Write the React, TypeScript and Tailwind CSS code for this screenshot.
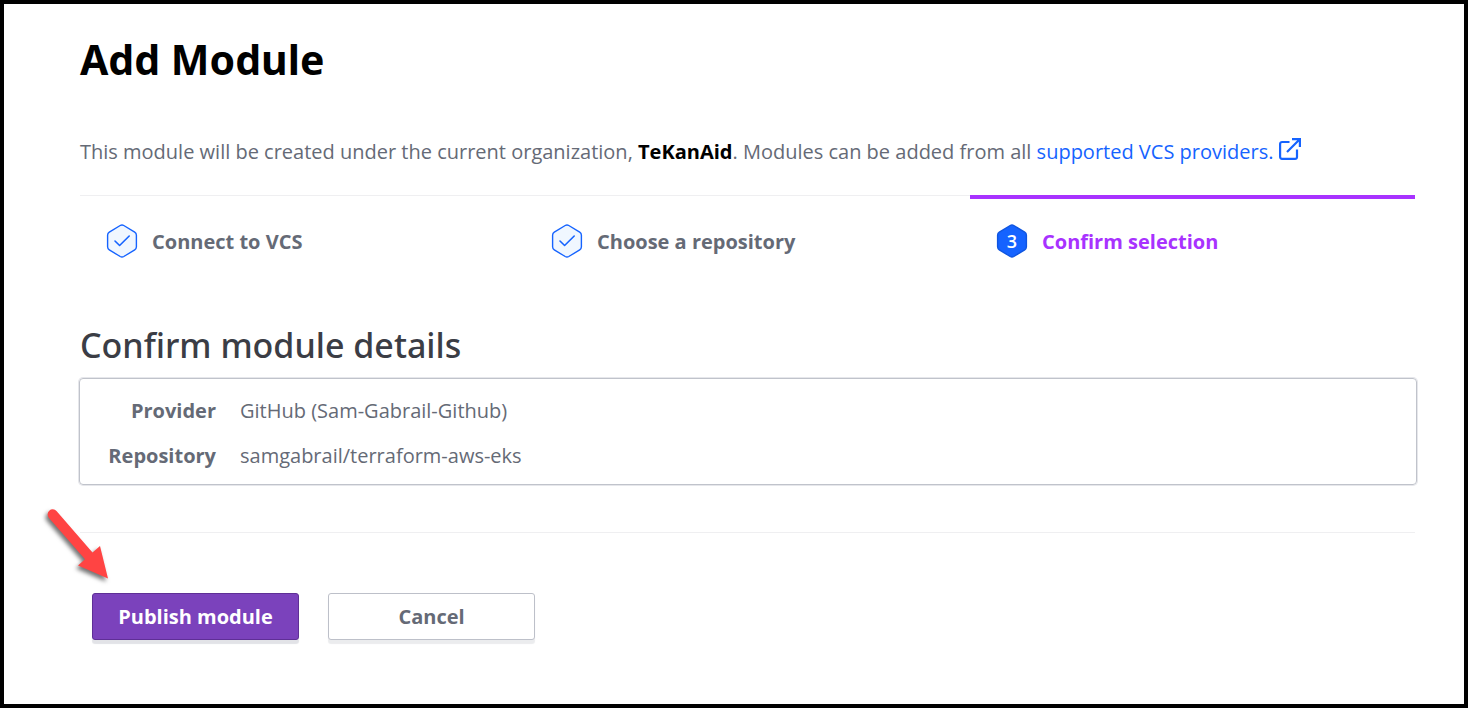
interface Step {
  number: number
  label: string
  done: boolean
}

const steps: Step[] = [
  { number: 1, label: 'Connect to VCS', done: true },
  { number: 2, label: 'Choose a repository', done: true },
  { number: 3, label: 'Confirm selection', done: false },
]

const details = [
  { term: 'Provider', value: 'GitHub (Sam-Gabrail-Github)' },
  { term: 'Repository', value: 'samgabrail/terraform-aws-eks' },
]

const HEXAGON =
  'M14.2 1.5a3.6 3.6 0 0 1 3.6 0l10.9 6.7a3.6 3.6 0 0 1 1.7 3.1v11.4a3.6 3.6 0 0 1-1.7 3.1l-10.9 6.7a3.6 3.6 0 0 1-3.6 0L3.3 25.8A3.6 3.6 0 0 1 1.6 22.7V11.3a3.6 3.6 0 0 1 1.7-3.1z'

function StepBadge({ step }: { step: Step }) {
  return (
    <span className="relative flex h-[34px] w-8 items-center justify-center">
      <svg className="absolute inset-0" width="32" height="34" viewBox="0 0 32 34" aria-hidden="true">
        <path
          d={HEXAGON}
          fill={step.done ? '#f0f7ff' : '#1563ff'}
          stroke={step.done ? '#1563ff' : '#0f55e0'}
          strokeWidth="1.4"
        />
        {step.done && (
          <path
            d="M9 17l4.600 4.500L23.200 12"
            fill="none"
            stroke="#1563ff"
            strokeWidth="1.6"
            strokeLinecap="round"
            strokeLinejoin="round"
          />
        )}
      </svg>
      {!step.done && <span className="relative text-lg font-semibold text-white">{step.number}</span>}
    </span>
  )
}

function ExternalLinkIcon() {
  return (
    <svg className="ml-[6px] inline-block align-[-1px]" width="22" height="22" viewBox="0 0 22 22" fill="none" aria-hidden="true">
      <path
        d="M10.5 4H3.2A2 2 0 0 0 1.1 6V19A2 2 0 0 0 3.2 20.9H16A2 2 0 0 0 18 19V11.5"
        stroke="#1563ff"
        strokeWidth="2.2"
      />
      <path d="M8 14L20.5 1.5M13 1.1H20.9V9" stroke="#1563ff" strokeWidth="2.2" />
    </svg>
  )
}

// Red callout that points at the publish button
function Arrow() {
  return (
    <svg
      className="pointer-events-none absolute -top-[90px] -left-[55px]"
      width="80"
      height="90"
      viewBox="0 0 80 90"
      aria-hidden="true"
    >
      <path
        d="M19.500 8L55.500 49.500L63 43L71 75.500L41 62.500L48 56.200L12 15A4.900 4.900 0 0 1 19.500 8Z"
        fill="#ff4443"
        className="drop-shadow-[-2px_3px_2px_rgba(0,0,0,0.55)]"
      />
    </svg>
  )
}

export default function App() {
  return (
    <div className="min-h-screen border-4 border-black bg-white pt-[31px] pr-[49px] pb-14 pl-[76px] font-['Open_Sans','Noto_Sans',sans-serif] text-xl text-[#656a76]">
      <h1 className="font-['Noto_Sans',sans-serif] text-[41px] leading-[48px] font-bold text-black">Add Module</h1>

      <p className="mt-[53px] leading-8">
        This module will be created under the current organization,{' '}
        <strong className="font-bold text-black">TeKanAid</strong>. Modules can be added from all{' '}
        <a href="#providers" className="text-[#1563ff]">
          supported VCS providers.
          <ExternalLinkIcon />
        </a>
      </p>

      <ol className="mt-[27px] grid grid-cols-3">
        {steps.map(step => (
          <li
            key={step.number}
            className={
              step.done
                ? 'flex h-[92px] items-center gap-[14px] pl-[26px] font-bold shadow-[inset_0_1px_0_#efeff1]'
                : 'flex h-[92px] items-center gap-[14px] pl-[26px] font-bold text-[#a832ff] shadow-[inset_0_4px_0_#a832ff]'
            }
            aria-current={step.done ? undefined : 'step'}
          >
            <StepBadge step={step} />
            <span className="pt-[2px]">{step.label}</span>
          </li>
        ))}
      </ol>

      <h2 className="mt-[34px] font-['Noto_Sans',sans-serif] text-[34px] leading-[48px] font-medium text-[#3b3d45]">
        Confirm module details
      </h2>

      <dl className="-mr-[2px] -ml-px mt-[9px] rounded-[4px] border border-[#c0c3cb] pt-[9px] pb-[6px] shadow-[0_0_0_1px_#e6e7eb]">
        {details.map(item => (
          <div key={item.term} className="flex gap-6 leading-[45px]">
            <dt className="w-[136px] text-right font-bold">{item.term}</dt>
            <dd>{item.value}</dd>
          </div>
        ))}
      </dl>

      <hr className="mt-[47px] border-[#efeff1]" />

      <div className="relative mt-[60px] ml-3 flex gap-[29px]">
        <Arrow />
        <button
          type="button"
          className="h-[47px] w-[207px] rounded-[3px] border border-[#5f2f96] bg-[#7b42bc] pt-px font-bold text-white shadow-[0_4px_1px_#e2e3e7]"
        >
          Publish module
        </button>
        <button
          type="button"
          className="h-[47px] w-[207px] rounded-[3px] border border-[#bdc0c9] bg-white pt-px font-bold shadow-[0_4px_1px_#ebecee]"
        >
          Cancel
        </button>
      </div>
    </div>
  )
}
